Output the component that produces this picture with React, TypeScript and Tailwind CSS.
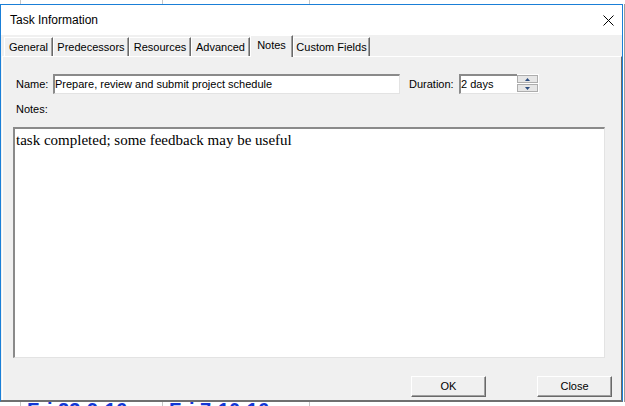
import React from 'react'

const TABS = [
  { label: 'General', width: 'w-[49px]' },
  { label: 'Predecessors', width: 'w-[76px]' },
  { label: 'Resources', width: 'w-[62px]' },
  { label: 'Advanced', width: 'w-[59px]' },
  { label: 'Notes', width: 'w-[43px]', active: true },
  { label: 'Custom Fields', width: 'w-[77px]' },
]

function GridStrip({ children }: { children?: React.ReactNode }) {
  // backdrop of the Project grid, seen above and below the dialog
  return (
    <div className="h-[4px] flex overflow-hidden bg-white">
      <div className="w-[20px]" />
      <div className="w-[1px] bg-[#c6c6c6]" />
      <div className="w-[141px] pl-[6px]">{Array.isArray(children) ? children[0] : null}</div>
      <div className="w-[1px] bg-[#c6c6c6]" />
      <div className="w-[146px] pl-[6px]">{Array.isArray(children) ? children[1] : null}</div>
      <div className="w-[1px] bg-[#c6c6c6]" />
      <div className="flex-1" />
    </div>
  )
}

function Tab({ label, width, active }: { label: string; width: string; active?: boolean }) {
  if (active) {
    return (
      <div
        className={`${width} h-[22px] mb-[-1px] relative z-10 bg-[#f0f0f0] border-t border-l border-white border-r border-r-[#696969] shadow-[inset_-1px_0_0_#a0a0a0] flex items-center justify-center pb-[2px]`}
      >
        {label}
      </div>
    )
  }
  return (
    <div
      className={`${width} h-[19px] bg-[#f0f0f0] border-t border-l border-white border-r border-r-[#696969] shadow-[inset_-1px_0_0_#a0a0a0] flex items-center justify-center`}
    >
      {label}
    </div>
  )
}

function SpinButton({ up, height }: { up?: boolean; height: string }) {
  return (
    <div className={`${height} w-full bg-[#e6e6e6] border border-[#adadad] flex items-center justify-center`}>
      <svg width="5" height="3" viewBox="0 0 5 3">
        {up ? <path d="M2.5 0 L5 3 L0 3 Z" fill="#2b4c7e" /> : <path d="M0 0 L5 0 L2.5 3 Z" fill="#2b4c7e" />}
      </svg>
    </div>
  )
}

function Button({ label }: { label: string }) {
  return (
    <button className="w-[75px] h-[21px] bg-[#f0f0f0] border-t border-l border-white border-r border-b border-r-[#696969] border-b-[#696969] shadow-[inset_-1px_-1px_0_#a0a0a0] flex items-center justify-center text-[11px]">
      {label}
    </button>
  )
}

export default function App() {
  return (
    <div className="w-[625px] h-[406px] overflow-hidden bg-white flex flex-col font-['Liberation_Sans',Arial,sans-serif] text-[11px] text-black">
      <GridStrip />

      <div className="h-[398px] flex">
        <div className="w-[623px] flex flex-col border-x border-t border-[#1a7fd7] border-b-2 border-b-[#6f6f6f]">
          {/* Title bar */}
          <div className="h-[30px] bg-white flex items-center justify-between pl-[9px] pr-[8px]">
            <span className="text-[12px]">Task Information</span>
            <svg width="11" height="11" viewBox="0 0 11 11">
              <path d="M0.5 0.5 L10.5 10.5 M10.5 0.5 L0.5 10.5" stroke="#000" strokeWidth="1" />
            </svg>
          </div>

          {/* Body */}
          <div className="flex-1 bg-[#f0f0f0] flex flex-col pl-[1px]">
            <div className="h-[21px] flex items-end pl-[2px]">
              {TABS.map(t => (
                <Tab key={t.label} label={t.label} width={t.width} active={t.active} />
              ))}
            </div>

            <div className="flex-1 flex flex-col border-t border-l border-white border-r border-r-[#696969] pl-[10px] pt-[17px]">
              {/* Name / Duration */}
              <div className="h-[20px] flex items-center pl-[3px]">
                <span className="w-[37px]">Name:</span>
                <div className="w-[347px] h-[20px] bg-white border-t-2 border-l-2 border-t-[#8a8a8a] border-l-[#8a8a8a] border-r border-b border-r-[#e3e3e3] border-b-[#e3e3e3] flex items-center">
                  Prepare, review and submit project schedule
                </div>
                <span className="ml-[9px] w-[50px]">Duration:</span>
                <div className="w-[58px] h-[20px] bg-white border-t-2 border-l-2 border-t-[#8a8a8a] border-l-[#8a8a8a] border-b border-b-[#e3e3e3] flex items-center">
                  2 days
                </div>
                <div className="w-[22px] h-[20px] bg-white flex flex-col gap-[1px] py-[1px] pr-[1px] border-b border-b-[#e3e3e3]">
                  <SpinButton up height="h-[9px]" />
                  <SpinButton height="h-[8px]" />
                </div>
              </div>

              <div className="mt-[8px] h-[14px] leading-[14px] pl-[3px]">Notes:</div>

              <div className="mt-[11px] w-[592px] h-[231px] bg-white border-t-2 border-l-2 border-t-[#8a8a8a] border-l-[#8a8a8a] border-r border-b border-r-[#e3e3e3] border-b-[#e3e3e3] pl-[1px] pt-[3px] font-['Liberation_Serif','Times_New_Roman',serif] text-[15px] leading-[17px]">
                task completed; some feedback may be useful
              </div>

              <div className="mt-[18px] flex justify-end gap-[51px] pr-[9px]">
                <Button label="OK" />
                <Button label="Close" />
              </div>
            </div>
          </div>
        </div>
        <div className="w-[1px] bg-white" />
        <div className="w-[1px] bg-[#9c9c9c]" />
      </div>

      <GridStrip>
        <div className="mt-[-2px] text-[20px] leading-[20px] font-bold text-[#1237d6] whitespace-nowrap">Fri 23-9-16</div>
        <div className="mt-[-2px] text-[20px] leading-[20px] font-bold text-[#1237d6] whitespace-nowrap">Fri 7-10-16</div>
      </GridStrip>
    </div>
  )
}
